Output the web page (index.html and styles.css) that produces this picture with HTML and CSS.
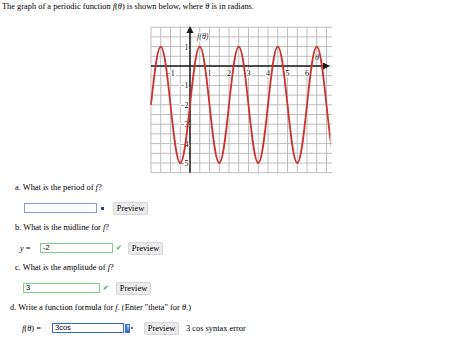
FILE: index.html
```html
<!DOCTYPE html>
<html>
<head>
<meta charset="utf-8">
<link rel="stylesheet" href="styles.css">
</head>
<body>
<div class="page">
  <div class="title">The graph of a periodic function <i>f</i>(<i>θ</i>) is shown below, where <i>θ</i> is in radians.</div>
  <div class="graph">
    <svg width="192" height="154" viewBox="0 0 192 154">
      <defs>
        <clipPath id="clip"><rect x="0" y="0" width="185.4" height="154"/></clipPath>
      </defs>
      <g stroke="#bdbdbd" stroke-width="1">
        <path d="M6,5.2V150.7M15.75,5.2V150.7M25.5,5.2V150.7M35.25,5.2V150.7M45,5.2V150.7M54.75,5.2V150.7M64.5,5.2V150.7M74.25,5.2V150.7M84,5.2V150.7M93.75,5.2V150.7M103.5,5.2V150.7M113.25,5.2V150.7M123,5.2V150.7M132.75,5.2V150.7M142.5,5.2V150.7M152.25,5.2V150.7M162,5.2V150.7M171.75,5.2V150.7M181.5,5.2V150.7"/>
        <path d="M6,5.2H187M6,14.9H187M6,24.6H187M6,34.3H187M6,44H187M6,53.7H187M6,63.4H187M6,73.1H187M6,82.8H187M6,92.5H187M6,102.2H187M6,111.9H187M6,121.6H187M6,131.3H187M6,141H187M6,150.7H187"/>
      </g>
      <g stroke="#1a1a1a" stroke-width="1.5" fill="none">
        <path d="M6,44H181"/>
        <path d="M45,8V150.7"/>
      </g>
      <path d="M185,44L178,40.5V47.5Z" fill="#1a1a1a"/>
      <path d="M45,4L41.5,11H48.5Z" fill="#1a1a1a"/>
      <g font-family="'Liberation Serif', serif" font-size="8" fill="#111" stroke="#fff" stroke-width="2" paint-order="stroke" stroke-linejoin="round">
        <text x="25.5" y="53.8" text-anchor="middle">−1</text>
        <text x="64.5" y="53.8" text-anchor="middle">1</text>
        <text x="84" y="53.8" text-anchor="middle">2</text>
        <text x="103.5" y="53.8" text-anchor="middle">3</text>
        <text x="123" y="53.8" text-anchor="middle">4</text>
        <text x="142.5" y="53.8" text-anchor="middle">5</text>
        <text x="162" y="53.8" text-anchor="middle">6</text>
        <text x="43.5" y="27.5" text-anchor="end">1</text>
        <text x="43.5" y="66.3" text-anchor="end">−1</text>
        <text x="43.5" y="85.7" text-anchor="end">−2</text>
        <text x="43.5" y="105.1" text-anchor="end">−3</text>
        <text x="43.5" y="124.5" text-anchor="end">−4</text>
        <text x="43.5" y="143.9" text-anchor="end">−5</text>
        <text x="52" y="16.8" font-style="italic">f(θ)</text>
        <text x="170" y="38" font-style="italic">θ</text>
      </g>
      <path clip-path="url(#clip)" fill="none" stroke="#cc3333" stroke-width="1.8"
        d="M6,82.8
        c3.18,-29.82 6.22,-58.2 9.75,-58.2 c3.53,0 6.57,28.38 9.75,58.2 c3.18,29.82 6.22,58.2 9.75,58.2 c3.53,0 6.57,-28.38 9.75,-58.2
        c3.18,-29.82 6.22,-58.2 9.75,-58.2 c3.53,0 6.57,28.38 9.75,58.2 c3.18,29.82 6.22,58.2 9.75,58.2 c3.53,0 6.57,-28.38 9.75,-58.2
        c3.18,-29.82 6.22,-58.2 9.75,-58.2 c3.53,0 6.57,28.38 9.75,58.2 c3.18,29.82 6.22,58.2 9.75,58.2 c3.53,0 6.57,-28.38 9.75,-58.2
        c3.18,-29.82 6.22,-58.2 9.75,-58.2 c3.53,0 6.57,28.38 9.75,58.2 c3.18,29.82 6.22,58.2 9.75,58.2 c3.53,0 6.57,-28.38 9.75,-58.2
        c3.18,-29.82 6.22,-58.2 9.75,-58.2 c3.53,0 6.57,28.38 9.75,58.2 c3.18,29.82 6.22,58.2 9.75,58.2"/>
    </svg>
  </div>

  <div class="q q-a">a. What is the period of <i>f</i>?</div>
  <div class="row row-a">
    <span class="inp inp-a"></span>
    <span class="mark-blue"></span>
    <span class="btn">Preview</span>
  </div>

  <div class="q q-b">b. What is the midline for <i>f</i>?</div>
  <div class="row row-b">
    <span class="lbl"><i>y</i> =</span>
    <span class="inp inp-b">-2</span>
    <span class="check">✔</span>
    <span class="btn">Preview</span>
  </div>

  <div class="q q-c">c. What is the amplitude of <i>f</i>?</div>
  <div class="row row-c">
    <span class="inp inp-c">3</span>
    <span class="check">✔</span>
    <span class="btn">Preview</span>
  </div>

  <div class="q q-d">d. Write a function formula for <i>f</i>. (Enter "theta" for <i>θ</i>.)</div>
  <div class="row row-d">
    <span class="lbl"><i>f</i>(<i>θ</i>) =</span>
    <span class="inp inp-d">3cos</span>
    <span class="icon-up">↑</span><span class="dot"></span>
    <span class="btn">Preview</span>
    <span class="err">3 cos syntax error</span>
  </div>
</div>
</body>
</html>
```

FILE: styles.css
```css
html, body {
  margin: 0;
  padding: 0;
  background: #fff;
}
.page {
  font-family: "Liberation Serif", "Times New Roman", serif;
  font-size: 8.4px;
  color: #000;
  display: flex;
  flex-direction: column;
}
.title {
  height: 14px;
  line-height: 14px;
  padding-left: 2px;
}
.graph {
  margin-top: 8px;
  padding-left: 145px;
  height: 154px;
}
.graph svg {
  display: block;
}
.q {
  height: 20px;
  line-height: 20px;
  padding-left: 15px;
}
.q-a { margin-top: 2px; }
.q-d { padding-left: 10px; }
.row {
  height: 20px;
  display: flex;
  align-items: center;
}
.inp {
  box-sizing: border-box;
  height: 10px;
  border: 1px solid #8a94d8;
  background: #fff;
  font-size: 7.5px;
  line-height: 8px;
  padding-left: 2px;
  font-family: "Liberation Sans", Arial, sans-serif;
}
.row-a { padding-left: 24px; }
.inp-a { width: 73px; }
.mark-blue {
  width: 3px;
  height: 3px;
  background: #2a3fb0;
  margin-left: 4px;
}
.row-a .btn { margin-left: 9px; }

.row-b { padding-left: 20px; }
.lbl { width: 20px; }
.inp-b { width: 73px; border-color: #7fcf8a; }
.check {
  color: #3aa54a;
  font-size: 7px;
  margin-left: 3px;
  width: 6px;
  font-family: "DejaVu Sans", sans-serif;
}
.row-b .btn { margin-left: 6px; }

.row-c { padding-left: 23px; }
.inp-c { width: 77px; border-color: #7fcf8a; }
.row-c .btn { margin-left: 7px; }

.row-d { padding-left: 22px; }
.row-d .lbl { width: 30px; }
.inp-d { width: 72px; border-color: #3b63d6; }
.icon-up {
  width: 5px;
  height: 9px;
  background: #3b6fd8;
  color: #fff;
  font-size: 7px;
  line-height: 9px;
  text-align: center;
  margin-left: 1px;
  font-family: "DejaVu Sans", sans-serif;
}
.dot {
  width: 2px;
  height: 2px;
  background: #3b6fd8;
  margin-left: 1px;
}
.row-d .btn { margin-left: 11px; }
.err { margin-left: 7px; }

.btn {
  box-sizing: border-box;
  width: 35px;
  height: 13px;
  line-height: 11px;
  text-align: center;
  background: #ececec;
  border: 1px solid #d6d6d6;
  border-radius: 2px;
}
```
